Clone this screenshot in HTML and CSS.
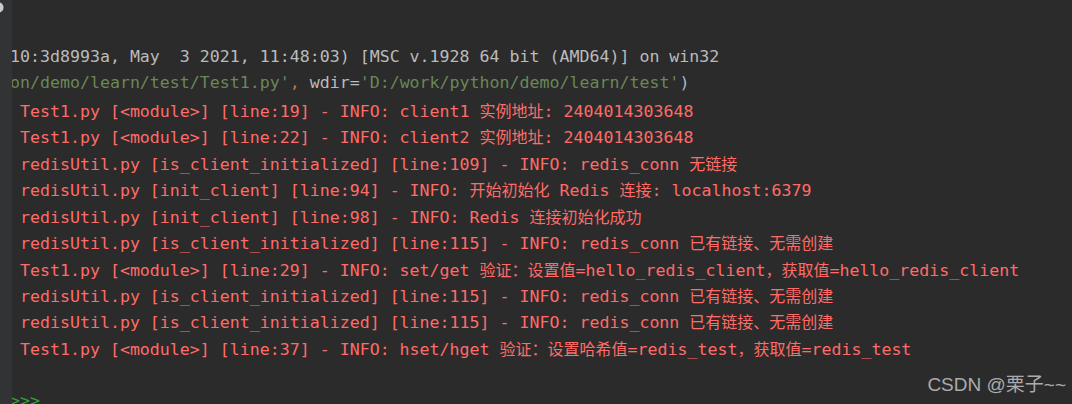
FILE: index.html
```html
<!DOCTYPE html>
<html lang="zh">
<head>
<meta charset="utf-8">
<title>Python Console</title>
<link rel="stylesheet" href="styles.css">
</head>
<body>
<div class="ide">
  <div class="gutter">
    <svg class="gutter-icon" width="12" height="16" viewBox="0 0 12 16"><ellipse cx="-1" cy="7.5" rx="4.5" ry="5" fill="#c9cccf"/></svg>
  </div>
  <div class="console">
    <div class="lines">
      <div class="ln out">10:3d8993a, May  3 2021, 11:48:03) [MSC v.1928 64 bit (AMD64)] on win32</div>
      <div class="ln out"><span class="str">on/demo/learn/test/Test1.py'</span><span class="kw">, </span>wdir=<span class="str">'D:/work/python/demo/learn/test'</span><span class="paren">)</span></div>
      <div class="ln err"> Test1.py [&lt;module&gt;] [line:19] - INFO: client1 <span class="zh">实例地址</span>: 2404014303648</div>
      <div class="ln err"> Test1.py [&lt;module&gt;] [line:22] - INFO: client2 <span class="zh">实例地址</span>: 2404014303648</div>
      <div class="ln err"> redisUtil.py [is_client_initialized] [line:109] - INFO: redis_conn <span class="zh">无链接</span></div>
      <div class="ln err"> redisUtil.py [init_client] [line:94] - INFO: <span class="zh">开始初始化</span> Redis <span class="zh">连接</span>: localhost:6379</div>
      <div class="ln err"> redisUtil.py [init_client] [line:98] - INFO: Redis <span class="zh">连接初始化成功</span></div>
      <div class="ln err"> redisUtil.py [is_client_initialized] [line:115] - INFO: redis_conn <span class="zh">已有链接、无需创建</span></div>
      <div class="ln err"> Test1.py [&lt;module&gt;] [line:29] - INFO: set/get <span class="zh">验证：设置值</span>=hello_redis_client<span class="zh">，获取值</span>=hello_redis_client</div>
      <div class="ln err"> redisUtil.py [is_client_initialized] [line:115] - INFO: redis_conn <span class="zh">已有链接、无需创建</span></div>
      <div class="ln err"> redisUtil.py [is_client_initialized] [line:115] - INFO: redis_conn <span class="zh">已有链接、无需创建</span></div>
      <div class="ln err"> Test1.py [&lt;module&gt;] [line:37] - INFO: hset/hget <span class="zh">验证：设置哈希值</span>=redis_test<span class="zh">，获取值</span>=redis_test</div>
      <div class="ln"></div>
      <div class="ln prompt">&gt;&gt;&gt;</div>
    </div>
  </div>
  <div class="watermark">CSDN @栗子~~</div>
</div>
</body>
</html>
```

FILE: styles.css
```css
html, body {
  margin: 0;
  padding: 0;
  background: #2b2b2b;
}

.ide {
  position: relative;
  display: flex;
  width: 1072px;
  height: 404px;
  overflow: hidden;
  background: #2b2b2b;
}

.gutter {
  flex: 0 0 12px;
  width: 12px;
  background: #313335;
  position: relative;
  z-index: 1;
}

.gutter-icon {
  display: block;
  margin-top: 0;
}

.console {
  flex: 1;
  overflow: hidden;
  min-width: 0;
}

.lines {
  margin-left: -2px;
  padding-top: 44px;
  font-family: "DejaVu Sans Mono", "Liberation Mono", "Noto Sans CJK SC", monospace;
  font-size: 16.6px;
}

.ln {
  height: 26.44px;
  line-height: 26.44px;
  white-space: pre;
  color: #bbbbbb;
}

.zh {
  font-family: "Noto Sans CJK SC", sans-serif;
  font-size: 16px;
}

.err {
  color: #ff6b68;
}

.str {
  color: #6a8759;
}

.kw {
  color: #cc7832;
}

.paren {
  color: #a9b7c6;
}

.prompt {
  color: #35a035;
}

.watermark {
  position: absolute;
  right: 6px;
  top: 375px;
  font-family: "Liberation Sans", "Noto Sans CJK SC", sans-serif;
  font-size: 19px;
  line-height: 20px;
  color: #ababab;
  white-space: nowrap;
}
```
